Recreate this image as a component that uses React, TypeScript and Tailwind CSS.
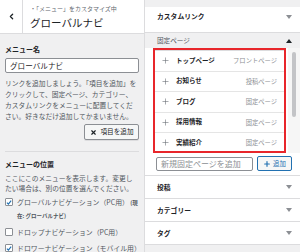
import { ChevronLeft, Plus, X } from "lucide-react";

const font = { fontFamily: '"Noto Sans CJK JP", "Noto Sans", sans-serif' };

const pages = [
  { title: "トップページ", kind: "フロントページ" },
  { title: "お知らせ", kind: "投稿ページ" },
  { title: "ブログ", kind: "固定ページ" },
  { title: "採用情報", kind: "固定ページ" },
  { title: "実績紹介", kind: "固定ページ" },
];

function Caret({ up = false }: { up?: boolean }) {
  return (
    <svg width="6" height="4" viewBox="0 0 6 4" className="shrink-0">
      {up ? <path d="M0 4 L3 0 L6 4 Z" fill="#1d2327" /> : <path d="M0 0 L6 0 L3 4 Z" fill="#8c8f94" />}
    </svg>
  );
}

function Checkbox({ checked }: { checked: boolean }) {
  return (
    <span className="mt-[2px] flex h-[8px] w-[8px] shrink-0 items-center justify-center rounded-[1px] border border-[#8c8f94] bg-white">
      {checked && (
        <svg width="7" height="7" viewBox="0 0 10 10">
          <path d="M1.5 5.2 L4 7.6 L8.6 2" fill="none" stroke="#2271b1" strokeWidth="2" />
        </svg>
      )}
    </span>
  );
}

function MenuPanel() {
  return (
    <div className="flex h-full w-[145px] shrink-0 flex-col border-r border-[#dcdcde] bg-[#f0f0f1]">
      <div className="flex h-[34px] shrink-0 border-b border-[#dcdcde] bg-white">
        <div className="flex w-[23px] items-center justify-center border-r border-[#dcdcde]">
          <ChevronLeft size={9} strokeWidth={3.5} color="#1d2327" />
        </div>
        <div className="flex flex-col pl-[7px] pt-[5px]">
          <span className="text-[6px] leading-[8px] text-[#646970]">・「メニュー」をカスタマイズ中</span>
          <span className="mt-[3px] text-[10.5px] leading-[13px] text-[#1d2327]">グローバルナビ</span>
        </div>
      </div>

      <div className="flex flex-col px-[5px]">
        <span className="mt-[10px] text-[7px] font-bold leading-[10px] text-[#1d2327]">メニュー名</span>
        <div className="mt-[4px] flex h-[15px] items-center rounded-[2px] border border-[#8c8f94] bg-white px-[4px] text-[7.6px] text-[#1d2327]">
          グローバルナビ
        </div>
        <p className="mt-[5px] text-[6.75px] leading-[11px] text-[#50575e]">
          リンクを追加しましょう。「項目を追加」をクリックして、固定ページ、カテゴリー、カスタムリンクをメニューに配置してください。好きなだけ追加してかまいません。
        </p>
        <div className="mt-[2px] flex justify-end">
          <div className="flex h-[16px] w-[55px] items-center justify-center gap-[4px] rounded-[2px] border border-[#8c8f94] bg-[#f6f7f7] shadow-[0_1px_0_#dcdcde]">
            <X size={7} strokeWidth={4} color="#1d2327" />
            <span className="text-[6.6px] text-[#1d2327]">項目を追加</span>
          </div>
        </div>
        <div className="mt-[11px] h-px bg-[#dcdcde]" />
        <span className="mt-[7px] text-[7px] font-bold leading-[10px] text-[#1d2327]">メニューの位置</span>
        <p className="mt-[4px] text-[6.75px] leading-[10px] text-[#50575e]">
          ここにこのメニューを表示します。変更したい場合は、別の位置を選んでください。
        </p>
        <div className="mt-[3px] flex flex-col gap-[4px]">
          <label className="flex gap-[4px]">
            <Checkbox checked />
            <span className="text-[6.9px] leading-[12px] text-[#50575e]">
              グローバルナビゲーション（PC用）
              <span className="text-[5.5px] font-bold leading-[12px]"> (現在: グローバルナビ)</span>
            </span>
          </label>
          <label className="flex gap-[4px]">
            <Checkbox checked={false} />
            <span className="text-[6.9px] leading-[12px] text-[#50575e]">ドロップナビゲーション（PC用）</span>
          </label>
          <label className="flex gap-[4px]">
            <Checkbox checked />
            <span className="text-[6.9px] leading-[12px] text-[#50575e]">ドロワーナビゲーション（モバイル用）</span>
          </label>
        </div>
      </div>
    </div>
  );
}

function SectionRow({ label }: { label: string }) {
  return (
    <div className="flex h-[23px] items-center justify-between border-b border-[#dcdcde] bg-white pl-[12px] pr-[8px]">
      <span className="text-[6.8px] font-bold text-[#1d2327]">{label}</span>
      <Caret />
    </div>
  );
}

function ItemsPanel() {
  return (
    <div className="flex h-full flex-1 flex-col bg-[#f0f0f1] pt-[7px]">
      <div className="flex h-[26px] items-center justify-between border-b border-[#dcdcde] bg-white pb-[6px] pl-[12px] pr-[8px]">
        <span className="text-[6.8px] font-bold text-[#1d2327]">カスタムリンク</span>
        <Caret />
      </div>
      <div className="flex h-[15px] items-center justify-between pl-[12px] pr-[8px]">
        <span className="text-[6.6px] text-[#50575e]">固定ページ</span>
        <Caret up />
      </div>
      <div className="flex flex-col border-b border-[#dcdcde] bg-white pb-[4px]">
        <div className="flex">
          <div className="ml-[8px] h-[105px] w-[133px] overflow-hidden border-2 border-[#e8262b] bg-white">
            <div className="flex flex-col border-t border-[#dcdcde]">
              {pages.map((p) => (
                <div key={p.title} className="flex h-[20.5px] shrink-0 items-center border-b border-[#e5e5e5] pl-[6px] pr-[7px]">
                  <Plus size={9} strokeWidth={1.5} color="#646970" />
                  <span className="ml-[6px] text-[6.5px] font-bold text-[#1d2327]">{p.title}</span>
                  <span className="ml-auto text-[6.3px] text-[#8c8f94]">{p.kind}</span>
                </div>
              ))}
            </div>
          </div>
          <div className="ml-[2px] flex w-[12px] justify-center bg-[#f6f6f6]">
            <div className="mt-[4px] h-[65px] w-[4px] rounded-full bg-[#c3c4c7]" />
          </div>
        </div>
        <div className="mt-[3px] flex items-center gap-[4px] pl-[11px]">
          <div className="flex h-[14px] w-[97px] items-center rounded-[2px] border border-[#8c8f94] bg-white px-[4px] text-[8px] text-[#8c8f94]">
            新規固定ページを追加
          </div>
          <div className="flex h-[15px] w-[35px] items-center justify-center gap-[2px] rounded-[2px] border border-[#2271b1] bg-[#f6f7f7]">
            <Plus size={8} strokeWidth={3.5} color="#2271b1" />
            <span className="text-[6.4px] text-[#2271b1]">追加</span>
          </div>
        </div>
      </div>
      <SectionRow label="投稿" />
      <SectionRow label="カテゴリー" />
      <SectionRow label="タグ" />
    </div>
  );
}

export default function App() {
  return (
    <div className="flex h-[252px] w-[300px] overflow-hidden bg-white" style={font}>
      <MenuPanel />
      <ItemsPanel />
    </div>
  );
}
